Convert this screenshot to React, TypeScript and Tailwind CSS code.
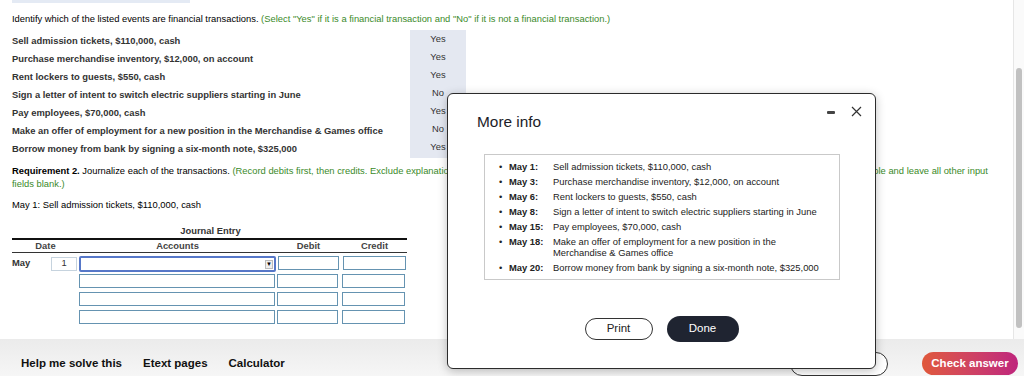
const events = [
  { text: "Sell admission tickets, $110,000, cash", answer: "Yes" },
  { text: "Purchase merchandise inventory, $12,000, on account", answer: "Yes" },
  { text: "Rent lockers to guests, $550, cash", answer: "Yes" },
  { text: "Sign a letter of intent to switch electric suppliers starting in June", answer: "No" },
  { text: "Pay employees, $70,000, cash", answer: "Yes" },
  { text: "Make an offer of employment for a new position in the Merchandise & Games office", answer: "No" },
  { text: "Borrow money from bank by signing a six-month note, $325,000", answer: "Yes" },
];

const moreInfo = [
  { date: "May 1:", text: "Sell admission tickets, $110,000, cash" },
  { date: "May 3:", text: "Purchase merchandise inventory, $12,000, on account" },
  { date: "May 6:", text: "Rent lockers to guests, $550, cash" },
  { date: "May 8:", text: "Sign a letter of intent to switch electric suppliers starting in June" },
  { date: "May 15:", text: "Pay employees, $70,000, cash" },
  { date: "May 18:", text: "Make an offer of employment for a new position in the Merchandise & Games office" },
  { date: "May 20:", text: "Borrow money from bank by signing a six-month note, $325,000" },
];

function EntryRow({ first }: { first?: boolean }) {
  return (
    <div className="flex h-[18px] items-start">
      <div className="flex h-[15px] w-[67px] items-center">
        {first ? (
          <>
            <span className="w-[39px] font-bold text-[#333]">May</span>
            <div className="flex h-[14px] w-[26px] items-center justify-center border border-[#c6d3de] text-[#333]">1</div>
          </>
        ) : null}
      </div>
      {first ? (
        <div className="flex h-[16px] w-[197px] items-center justify-end rounded-[2px] border-2 border-[#5677c8] pr-[1px]">
          <div className="flex h-[9px] w-[8px] items-center justify-center border border-[#bbb] bg-[#eee] text-[6px] leading-none text-black">▼</div>
        </div>
      ) : (
        <div className="h-[14px] w-[196px] border border-[#6593b1]" />
      )}
      <div className="ml-[2px] h-[14px] w-[61px] border border-[#6593b1]" />
      <div className="ml-[4px] h-[14px] w-[63px] border border-[#6593b1]" />
    </div>
  );
}

function MoreInfoModal() {
  return (
    <div className="absolute left-[447px] top-[93px] h-[276px] w-[429px] rounded-[6px] border border-[#2b2b2b] bg-white shadow-[0_2px_10px_rgba(0,0,0,0.25)]">
      <div className="absolute left-[379px] top-[17px] h-[3px] w-[8px] rounded-[1px] bg-[#444]" />
      <svg className="absolute left-[403px] top-[12px]" width="11" height="11" viewBox="0 0 11 11">
        <path d="M1 1 L10 10 M10 1 L1 10" stroke="#333" strokeWidth="1.2" />
      </svg>
      <h3 className="pl-[29px] pt-[19px] text-[15.4px] leading-[18px] text-[#1c1c28]">More info</h3>
      <div className="ml-[36px] mt-[23px] w-[356px] border border-[#c9c9c9] py-[6px] pl-[14px]">
        <ul className="space-y-[4px] text-[9.4px] leading-[11px] text-[#222]">
          {moreInfo.map((item) => (
            <li key={item.date} className="flex">
              <span className="w-[10px]">•</span>
              <span className="w-[44px] font-bold">{item.date}</span>
              <span className="w-[272px]">{item.text}</span>
            </li>
          ))}
        </ul>
      </div>
      <div className="mt-[36px] flex h-[26px] items-center justify-center gap-[14px]">
        <button type="button" className="h-[22px] w-[68px] rounded-full border border-[#333] text-[11.5px] text-[#222]">
          Print
        </button>
        <button type="button" className="h-[26px] w-[72px] rounded-full bg-[#1f2431] text-[11.5px] text-white">
          Done
        </button>
      </div>
    </div>
  );
}

export default function App() {
  return (
    <div className="relative h-[376px] w-[1024px] overflow-hidden bg-white font-['Liberation_Sans',Arial,sans-serif] text-[9.4px]">
      <div className="flex h-[339px]">
        <div className="flex-1 pl-3">
          <div className="h-[3px] w-[178px] bg-[#e4eaf4]" />
          <p className="mt-[10px] leading-[12px] text-black">
            Identify which of the listed events are financial transactions.{" "}
            <span className="text-[#3b8a2a]">
              (Select "Yes" if it is a financial transaction and "No" if it is not a financial transaction.)
            </span>
          </p>

          <div className="mt-[5px] flex">
            <div className="w-[398px] pt-[2px]">
              {events.map((e) => (
                <div key={e.text} className="h-[18px] font-bold leading-[18px] text-[#333]">
                  {e.text}
                </div>
              ))}
            </div>
            <div className="w-[56px] bg-[#e4e8f1] pb-[1px]">
              {events.map((e) => (
                <div key={e.text} className="h-[18px] text-center leading-[18px] text-[#333]">
                  {e.answer}
                </div>
              ))}
            </div>
          </div>

          <p className="mt-[6px] whitespace-nowrap leading-[13px] text-black">
            <span className="font-bold">Requirement 2.</span> Journalize each of the transactions.{" "}
            <span className="text-[#3b8a2a]">
              (Record debits first, then credits. Exclude explanations from any journal entries. If no entry is required, select "No
              Entry Required" in line 1 of the Journal table and leave all other input
              <br />
              fields blank.)
            </span>
          </p>

          <p className="mt-[9px] leading-[12px] text-black">May 1: Sell admission tickets, $110,000, cash</p>

          <div className="mt-[14px] w-[395px]">
            <div className="text-center font-bold leading-[12px] text-[#333]">
              <span className="relative left-[1px]">Journal Entry</span>
            </div>
            <div className="mt-[1px] border-t-2 border-[#111]" />
            <div className="flex h-[13px] border-b border-[#333] font-bold leading-[12px] text-[#444]">
              <div className="w-[67px] text-center">Date</div>
              <div className="w-[197px] text-center">Accounts</div>
              <div className="ml-[2px] w-[61px] text-center">Debit</div>
              <div className="ml-[4px] w-[63px] text-center">Credit</div>
            </div>
            <div className="mt-[3px]">
              <EntryRow first />
              <EntryRow />
              <EntryRow />
              <EntryRow />
            </div>
          </div>
        </div>
        <div className="w-[11px] border-l border-[#e6e6e6] bg-[#fafafa]">
          <div className="ml-[2px] mt-[68px] h-[260px] w-[6px] rounded-full bg-[#c1c1c1]" />
        </div>
      </div>

      <div className="flex h-[37px] items-center bg-linear-to-b from-[#ebebeb] to-[#f6f6f6] pl-[21px] pr-[6px] pt-[12px]">
        <div className="flex gap-[21px] text-[11.5px] font-bold text-[#111]">
          <span>Help me solve this</span>
          <span>Etext pages</span>
          <span>Calculator</span>
        </div>
        <div className="ml-auto flex items-center gap-[34px]">
          <button type="button" className="h-[24px] w-[98px] rounded-full border border-[#333] bg-white text-[11px]">
            Clear all
          </button>
          <button
            type="button"
            className="h-[23px] w-[96px] rounded-full bg-linear-to-r from-[#e0583a] to-[#bf247c] text-[11.5px] font-bold text-white"
          >
            Check answer
          </button>
        </div>
      </div>

      <MoreInfoModal />
    </div>
  );
}
